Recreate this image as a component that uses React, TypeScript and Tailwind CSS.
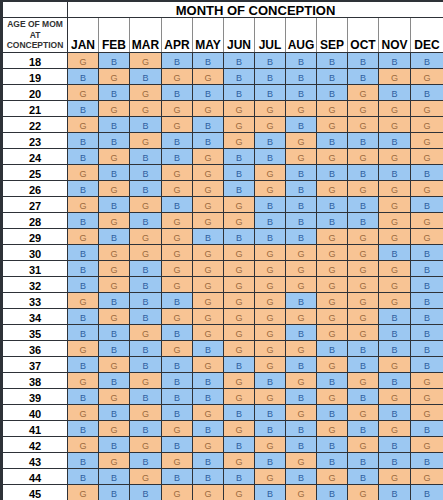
const MONTHS = ["JAN", "FEB", "MAR", "APR", "MAY", "JUN", "JUL", "AUG", "SEP", "OCT", "NOV", "DEC"];

// one string per age, one letter per month
const CHART: [number, string][] = [
  [18, "GBGBBBBBBBBB"],
  [19, "BGBGGBBBBBGG"],
  [20, "GBGBBBBBBGBB"],
  [21, "BGGGGGGGGGGG"],
  [22, "GBBGBGGBGGGG"],
  [23, "BBGBBGBGBBBG"],
  [24, "BGBBGBBGGGGG"],
  [25, "GBBGGBGBBBBB"],
  [26, "BGBGGBGBGGGG"],
  [27, "GBGBGGBBBBGB"],
  [28, "BGBGGGBBBBGG"],
  [29, "GBGGBBBBGGGG"],
  [30, "BGGGGGGGGGBB"],
  [31, "BGBGGGGGGGGB"],
  [32, "BGBGGGGGGGGB"],
  [33, "GBBBGGGBGGGB"],
  [34, "BGBGGGGGGGBB"],
  [35, "BBGBGGGBGGBB"],
  [36, "GBBGBGGGBBBB"],
  [37, "BGBBGBGBGBGB"],
  [38, "GBGBBGBGBGBG"],
  [39, "BGBBBGGBGBGG"],
  [40, "GBGBGBBGBGBG"],
  [41, "BGBGBGBBGBGB"],
  [42, "GBGBGBGBBGBG"],
  [43, "BGBGBGBGBBBB"],
  [44, "BBGBBBGBGBGG"],
  [45, "GBBGGGBGBGBB"],
];

function Cell({ value }: { value: string }) {
  const girl = value === "G";
  return (
    <div
      className={
        girl
          ? "flex items-end justify-center bg-[#f8c494] text-[9px] leading-[11px] text-[#9a6a40]"
          : "flex items-end justify-center bg-[#9cc8f2] text-[9px] leading-[11px] text-[#2f5f9f]"
      }
    >
      {value}
    </div>
  );
}

export default function App() {
  return (
    <div className="h-[500px] w-[443px] overflow-hidden bg-[#2e3238] pl-[3px] pt-[2px] font-['Liberation_Sans',Arial,sans-serif]">
      <div className="grid grid-cols-[64px_30px_30px_31px_30px_30px_30px_30px_30px_30px_30px_31px_32px] grid-rows-[15px_34px_repeat(28,15px)] gap-px">
        <div className="bg-white" />
        <div className="col-span-12 flex items-end justify-center bg-white text-[13px] font-bold leading-[13px] text-black">
          MONTH OF CONCEPTION
        </div>

        <div className="flex flex-col items-center justify-center bg-white text-[8.5px] font-bold leading-[10.8px] text-[#333]">
          <span>AGE OF MOM</span>
          <span>AT</span>
          <span>CONCEPTION</span>
        </div>
        {MONTHS.map((m, i) => (
          <div
            key={m}
            className={
              i === 0
                ? "flex items-end justify-center bg-white pb-px text-[12px] font-bold leading-[12px] text-black"
                : "flex items-end justify-center bg-white pb-px text-[12px] font-bold leading-[12px] text-black shadow-[-1px_0_0_#8a8a8a]"
            }
          >
            {m}
          </div>
        ))}

        {CHART.map(([age, row]) => [
          <div
            key={`age-${age}`}
            className="flex items-end justify-center bg-white text-[11px] font-bold leading-[12px] text-black"
          >
            {age}
          </div>,
          ...row.split("").map((v, i) => <Cell key={`${age}-${i}`} value={v} />),
        ])}
      </div>
    </div>
  );
}
